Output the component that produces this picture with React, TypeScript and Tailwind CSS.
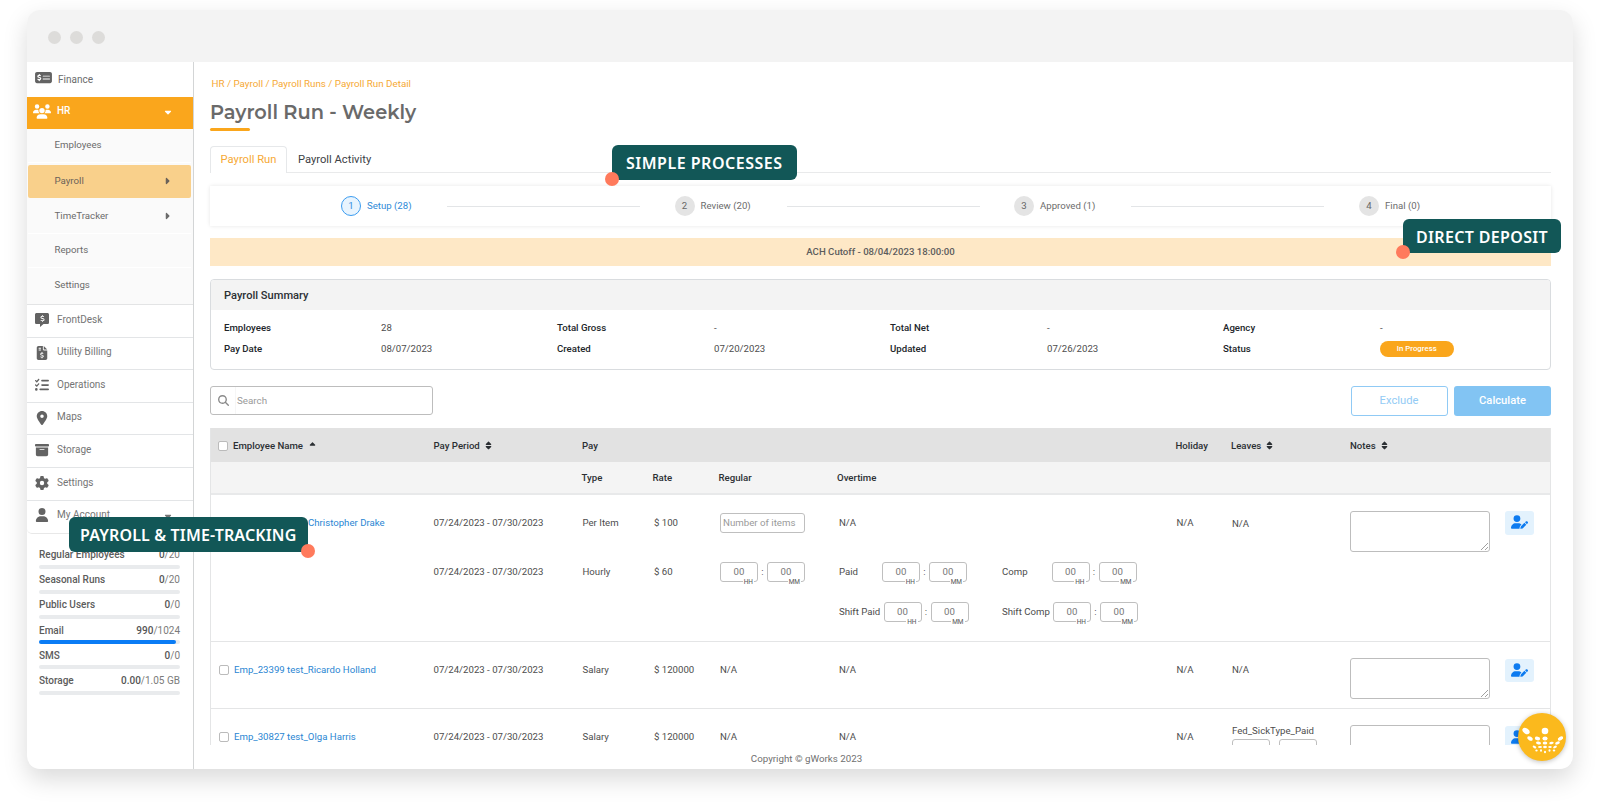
import React from "react";
import {
  FaMoneyCheckDollar, FaUsers, FaFileInvoiceDollar, FaListCheck, FaLocationDot, FaBoxArchive, FaGear,
  FaUser, FaUserPen, FaMagnifyingGlass, FaSort, FaCaretDown, FaCaretRight, FaCaretUp, FaDollarSign,
} from "react-icons/fa6";

type Kids = { children?: React.ReactNode; className?: string };

function MessageDollar() {
  return (
    <span className="grid">
      <svg viewBox="0 0 14 14" className="col-start-1 row-start-1 size-[14px]" fill="currentColor">
        <path d="M1.6 0h10.8C13.300 0 14 .7 14 1.600v7.800c0 .9-.7 1.600-1.600 1.600H8.500L5 13.900V11H1.600C.7 11 0 10.300 0 9.400V1.600C0 .7.7 0 1.600 0z" />
      </svg>
      <FaDollarSign className="col-start-1 row-start-1 mt-[2px] size-[7px] justify-self-center text-white" />
    </span>
  );
}

const menu = [
  { label: "FrontDesk", icon: <MessageDollar /> },
  { label: "Utility Billing", icon: <FaFileInvoiceDollar className="size-[14px]" /> },
  { label: "Operations", icon: <FaListCheck className="size-[14px]" /> },
  { label: "Maps", icon: <FaLocationDot className="size-[14px]" /> },
  { label: "Storage", icon: <FaBoxArchive className="size-[14px]" /> },
  { label: "Settings", icon: <FaGear className="size-[14px]" /> },
];

const usage = [
  { label: "Regular Employees", used: "0", total: "20", pct: 0 },
  { label: "Seasonal Runs", used: "0", total: "20", pct: 0 },
  { label: "Public Users", used: "0", total: "0", pct: 0 },
  { label: "Email", used: "990", total: "1024", pct: 97 },
  { label: "SMS", used: "0", total: "0", pct: 0 },
  { label: "Storage", used: "0.00", total: "1.05 GB", pct: 0 },
];

function SubItem({ label, active, arrow }: { label: string; active?: boolean; arrow?: boolean }) {
  return (
    <div className={active
      ? "ml-px mr-[2px] mt-[2px] mb-px flex h-[33px] shrink-0 items-center justify-between rounded-[2px] bg-[#f9d08b] pb-px pl-[26.500px] pr-[19px] text-[#6b6259]"
      : "ml-px mr-[2px] flex h-[34.500px] shrink-0 items-center justify-between border-b border-white pl-[26.500px] pr-[19px] last:border-0"}>
      <span>{label}</span>
      {arrow && <FaCaretRight className="size-[10px]" />}
    </div>
  );
}

function Sidebar() {
  return (
    <aside className="flex w-[167px] shrink-0 flex-col border-r border-[#d3d5d6] text-[10px] leading-none text-[#6b6b6b]">
      <div className="flex h-[35px] items-center pl-2">
        <FaMoneyCheckDollar className="mb-1 h-[15px] w-[17px] text-[#636363]" />
        <span className="ml-[6px]">Finance</span>
      </div>
      <div className="flex h-[31.500px] items-center bg-[#faa61c] pb-[2px] pl-[6px] pr-5 text-white">
        <FaUsers className="h-[17px] w-[18px]" />
        <span className="mb-px ml-[6px] grow font-medium">HR</span>
        <FaCaretDown className="mt-px size-[10px]" />
      </div>
      <div className="flex h-[176.500px] flex-col border-b border-[#e3e4e5] bg-[#fafafa] text-[9.700px]">
        <SubItem label="Employees" />
        <SubItem label="Payroll" active arrow />
        <SubItem label="TimeTracker" arrow />
        <SubItem label="Reports" />
        <SubItem label="Settings" />
      </div>
      {menu.map((m) => (
        <div key={m.label} className="flex h-[32.600px] items-center border-b border-[#e3e5e7] pb-[2.500px] pl-2 text-[#757575]">
          <span className="mt-px text-[#636363]">{m.icon}</span>
          <span className="ml-2">{m.label}</span>
        </div>
      ))}
      <div className="flex h-[33px] items-center rounded-bl-[5px] border-b border-[#e8e8e8] pb-[3px] pl-2 pr-5 text-[#757575]">
        <FaUser className="size-[14px] text-[#636363]" />
        <span className="ml-2 grow">My Account</span>
        <FaCaretDown className="mt-[2px] size-[10px]" />
      </div>
      <div className="flex flex-col pl-[12px] pr-[13px] pt-[12px]">
        {usage.map((u) => (
          <div key={u.label} className="h-[25.200px]">
            <div className="flex h-[18px] items-center justify-between pt-px">
              <span className="font-medium text-[#5c5c5c]">{u.label}</span>
              <span className="text-[#7b7b7b]"><b className="font-medium text-[#555]">{u.used}</b>/{u.total}</span>
            </div>
            <div className="mt-px h-1 rounded-full bg-[#e9ebed]">
              <div className="h-1 rounded-full bg-[#0a7cf5]" style={{ width: `${u.pct}%` }} />
            </div>
          </div>
        ))}
      </div>
    </aside>
  );
}

function Step({ n, label, active, className }: { n: number; label: string; active?: boolean; className: string }) {
  return (
    <div className={`flex shrink-0 items-center gap-[6px] ${className}`}>
      <span className={active
        ? "flex size-5 items-center justify-center rounded-full border border-[#3b9cf0] bg-[#e8f4fe] text-[#2f8fe0]"
        : "flex size-5 items-center justify-center rounded-full bg-[#e4e4e4] text-[#666]"}>{n}</span>
      <span className={active ? "text-[#2f8ad8]" : "text-[#6c6c6c]"}>{label}</span>
    </div>
  );
}

function StepLine({ className }: Kids) {
  return <div className={`h-px shrink-0 bg-[#e3e5e7] ${className}`} />;
}

function Pair({ a, b }: { a: string; b: React.ReactNode }) {
  return (
    <div className="flex h-[21px] items-center">
      <span className="w-[157px] font-medium text-[#212529]">{a}</span>
      <span>{b}</span>
    </div>
  );
}

function Unit({ unit }: { unit: string }) {
  return (
    <div className="relative flex h-5 w-[38px] items-center justify-center rounded-[3px] border border-[#bfbfbf] text-[#777]">
      00
      <span className="absolute -bottom-[4px] right-[3px] bg-white px-px text-[6.500px] leading-[6px] text-[#555]">{unit}</span>
    </div>
  );
}

function TimeInput() {
  return (
    <div className="flex items-center">
      <Unit unit="HH" />
      <span className="w-[9px] text-center">:</span>
      <Unit unit="MM" />
    </div>
  );
}

function Notes() {
  return (
    <div className="flex h-[41px] w-[140px] items-end justify-end rounded-[3px] border border-[#bdbdbd] p-px">
      <svg viewBox="0 0 7 7" className="size-[7px]" stroke="#888" strokeWidth=".8"><path d="M0 7 7 0M4 7 7 4" /></svg>
    </div>
  );
}

function EditButton() {
  return (
    <div className="flex h-[23.500px] w-[29px] items-center justify-center rounded-[3px] bg-[#e3f2fd] pb-px">
      <FaUserPen className="h-[14px] w-[17px] text-[#0d7bf0]" />
    </div>
  );
}

function Check() {
  return <span className="size-[10px] rounded-[2px] border border-[#bbb] bg-white" />;
}

const PERIOD = "07/24/2023 - 07/30/2023";

function SalaryRow({ name, leaves, className }: { name: string; leaves: React.ReactNode; className: string }) {
  return (
    <div className={`flex shrink-0 border-[#e4e5e6] ${className}`}>
      <div className="flex h-[55px] w-[222.500px] items-center gap-[5px] pl-2"><Check /><span className="text-[#2a86d3]">{name}</span></div>
      <div className="flex h-[55px] w-[149px] items-center">{PERIOD}</div>
      <div className="flex h-[55px] w-[71.500px] items-center">Salary</div>
      <div className="flex h-[55px] w-[66px] items-center">$ 120000</div>
      <div className="flex h-[55px] w-[119px] items-center">N/A</div>
      <div className="flex h-[55px] w-[337.500px] items-center">N/A</div>
      <div className="flex h-[55px] w-[55.500px] items-center">N/A</div>
      <div className="w-[118px]">{leaves}</div>
      <div className="w-[155px] pt-4"><Notes /></div>
      <div className="pt-[16.500px]"><EditButton /></div>
    </div>
  );
}

function Table() {
  return (
    <div className="mt-[12.500px] flex h-[316.500px] flex-col overflow-hidden border-x border-[#e4e5e6] text-[9.650px] text-[#4d4d4d]">
      <div className="-mx-px flex h-[33.500px] shrink-0 items-center bg-[#e2e2e2] pl-px pt-[2px] font-medium text-[#2b2f33]">
        <div className="flex w-[222.500px] items-center pl-[7px]"><Check /><span className="ml-[5px]">Employee Name</span><FaCaretUp className="mb-[3px] ml-[5px] size-[9px]" /></div>
        <div className="flex w-[148.500px] items-center gap-1">Pay Period <FaSort className="size-[9px]" /></div>
        <div className="w-[593.500px]">Pay</div>
        <div className="w-[55.500px]">Holiday</div>
        <div className="flex w-[119px] items-center gap-1">Leaves <FaSort className="size-[9px]" /></div>
        <div className="flex items-center gap-1">Notes <FaSort className="size-[9px]" /></div>
      </div>
      <div className="flex h-[33.500px] shrink-0 items-center border-b-2 border-[#e8e9ea] bg-[#f4f4f4] pl-[370.500px] pt-[2px] font-medium text-[#2b2f33]">
        <div className="w-[71px]">Type</div>
        <div className="w-[66px]">Rate</div>
        <div className="w-[118.500px]">Regular</div>
        <div>Overtime</div>
      </div>

      <div className="flex h-[147px] shrink-0 border-b border-[#e4e5e6]">
        <div className="flex h-[55px] w-[222.500px] items-center pl-[97px]"><span className="text-[#2a86d3]">Christopher Drake</span></div>
        <div className="flex w-[743px] flex-col">
          <div className="flex h-[55px] items-center">
            <div className="w-[149px]">{PERIOD}</div>
            <div className="w-[71.500px]">Per Item</div>
            <div className="w-[66px]">$ 100</div>
            <div className="w-[119px]">
              <div className="flex h-5 w-[85px] items-center rounded-[3px] border border-[#bfbfbf] pl-[2px] text-[9.700px] text-[#9a9a9a]">Number of items</div>
            </div>
            <div>N/A</div>
          </div>
          <div className="flex h-[43px] items-center">
            <div className="w-[149px]">{PERIOD}</div>
            <div className="w-[71.500px]">Hourly</div>
            <div className="w-[66px]">$ 60</div>
            <div className="w-[119px]"><TimeInput /></div>
            <div className="w-[43px]">Paid</div>
            <TimeInput />
            <div className="ml-[35px] w-[49.500px]">Comp</div>
            <TimeInput />
          </div>
          <div className="flex h-[38.500px] items-center pl-[405.500px]">
            <div className="w-[44.500px]">Shift Paid</div>
            <TimeInput />
            <div className="ml-[33.500px] w-[51px]">Shift Comp</div>
            <TimeInput />
          </div>
        </div>
        <div className="flex h-[55px] w-[55.500px] items-center">N/A</div>
        <div className="flex h-[57px] w-[118px] items-center">N/A</div>
        <div className="w-[155px] pt-[15.500px]"><Notes /></div>
        <div className="pt-4"><EditButton /></div>
      </div>

      <SalaryRow className="h-[67px] border-b" name="Emp_23399 test_Ricardo Holland" leaves={<div className="flex h-[56px] items-center">N/A</div>} />
      <SalaryRow
        className="h-[80px]"
        name="Emp_30827 test_Olga Harris"
        leaves={
          <div className="pt-[17px]">
            <div className="pb-[3px]">Fed_SickType_Paid</div>
            <div className="flex gap-[9px]">
              <div className="h-5 w-[38px] rounded-[3px] border border-[#bfbfbf]" />
              <div className="h-5 w-[38px] rounded-[3px] border border-[#bfbfbf]" />
            </div>
          </div>
        }
      />
    </div>
  );
}

function Callout({ children, className, dot }: Kids & { dot: string }) {
  return (
    <div className={`absolute flex h-[34.500px] items-center justify-center rounded-[6px] bg-[#125757] pt-[2px] font-['Noto_Sans','Open_Sans',sans-serif] text-[16px] font-semibold leading-none text-white ${className}`}>
      {children}
      <span className={`absolute -bottom-[6px] size-[14px] rounded-full bg-[#ff7a5c] ${dot}`} />
    </div>
  );
}

function ChatLogo() {
  return (
    <div className="absolute left-[1517.500px] top-[713px] size-[48px] rounded-full bg-[#fbb91d] shadow-[0_1px_5px_rgba(0,0,0,0.25)]">
      <svg viewBox="0 0 48 48" className="size-12" fill="#fff">
        <circle cx="27" cy="18" r="3.300" />
        <ellipse cx="8" cy="18" rx="4" ry="2.600" transform="rotate(35 8 18)" />
        <ellipse cx="12" cy="25.500" rx="3" ry="1.900" transform="rotate(30 12 25.500)" />
        <ellipse cx="19.500" cy="25.500" rx="2.700" ry="1.900" transform="rotate(10 19.500 25.500)" />
        <ellipse cx="27" cy="25.500" rx="2.600" ry="1.900" />
        <ellipse cx="42.500" cy="25.500" rx="2.900" ry="1.800" transform="rotate(-30 42.500 25.500)" />
        <ellipse cx="20.500" cy="30" rx="2.500" ry="1.400" transform="rotate(10 20.500 30)" />
        <ellipse cx="27" cy="30" rx="2.300" ry="1.500" />
        <ellipse cx="33.500" cy="30" rx="2.200" ry="1.300" transform="rotate(-10 33.500 30)" />
        <ellipse cx="39.500" cy="30" rx="2.500" ry="1.400" transform="rotate(-25 39.500 30)" />
        <ellipse cx="16.500" cy="34" rx="2" ry="1.100" transform="rotate(30 16.500 34)" />
        <ellipse cx="22" cy="34" rx="2" ry="1.100" />
        <ellipse cx="27" cy="34" rx="1.900" ry="1.200" />
        <ellipse cx="32" cy="34" rx="1.800" ry="1.100" />
        <ellipse cx="37" cy="34" rx="2" ry="1.100" transform="rotate(-25 37 34)" />
        <ellipse cx="18.500" cy="37.500" rx="1.200" ry="1" />
        <ellipse cx="23" cy="37.500" rx="1" ry="1.300" />
        <ellipse cx="27" cy="39" rx="1" ry="1.300" />
        <ellipse cx="31.500" cy="37.500" rx="1" ry="1.300" />
        <ellipse cx="36" cy="37.500" rx="1.300" ry="1" />
      </svg>
    </div>
  );
}

export default function App() {
  return (
    <div className="relative h-[808px] w-[1600px] overflow-hidden bg-white pl-[27px] pt-[10px] font-[Roboto,'Liberation_Sans',sans-serif] leading-none">
      <div className="flex h-[758.500px] w-[1546px] flex-col overflow-hidden rounded-[13px] bg-white shadow-[0_10px_24px_rgba(0,0,0,0.15)]">
        <div className="flex h-[52px] shrink-0 items-center gap-[9px] bg-[#f3f3f3] pl-[20.500px] pt-[2px]">
          <span className="size-[13px] rounded-full bg-[#dddcda]" />
          <span className="size-[13px] rounded-full bg-[#dddcda]" />
          <span className="size-[13px] rounded-full bg-[#dddcda]" />
        </div>
        <div className="flex min-h-0 grow">
          <Sidebar />
          <main className="flex grow flex-col pl-4 pr-[22px]">
            <nav className="mt-4 flex h-[11px] items-center pl-[1.500px] text-[9.800px] text-[#f6a935]">HR / Payroll / Payroll Runs / Payroll Run Detail</nav>
            <h1 className="mt-[12px] font-[Montserrat,Inter,sans-serif] text-[19.350px] font-semibold leading-[22px] text-[#6a6a6a]">Payroll Run - Weekly</h1>
            <div className="mt-[4.500px] h-[3px] w-10 shrink-0 rounded-full bg-[#faa61c]" />
            <div className="mt-[15.500px] flex h-[27px] text-[11.200px]">
              <div className="flex w-[77px] items-center justify-center rounded-t-[4px] border border-b-0 border-[#e6e8ea] text-[#f6a935]">Payroll Run</div>
              <div className="flex grow items-center border-b-[1.500px] border-[#e9eaeb] pl-[11px] pt-px text-[#3d4145]">Payroll Activity</div>
            </div>
            <div className="mt-[13px] flex h-10 items-center pl-[131px] text-[9.650px] shadow-[0_0_4px_rgba(0,0,0,0.10)]">
              <Step className="w-[106px]" n={1} label="Setup (28)" active />
              <StepLine className="w-[193px]" />
              <Step className="ml-[34.500px] w-[112px]" n={2} label="Review (20)" />
              <StepLine className="w-[193px]" />
              <Step className="ml-[34.500px] w-[117px]" n={3} label="Approved (1)" />
              <StepLine className="w-[193px]" />
              <Step className="ml-[35px]" n={4} label="Final (0)" />
            </div>
            <div className="mt-[12px] flex h-[28px] items-center justify-center bg-[#fee8c6] text-[9.650px] font-medium text-[#5c5c5c]">ACH Cutoff - 08/04/2023 18:00:00</div>
            <section className="mt-[13px] flex h-[90.500px] flex-col overflow-hidden rounded-[4px] border border-[#d9dcdf] text-[9.650px] text-[#4d4d4d]">
              <h2 className="flex h-[30px] items-center bg-[#f3f3f3] pl-[13px] pt-px text-[11.100px] font-medium text-[#2b2f33]">Payroll Summary</h2>
              <div className="grid grid-cols-[333px_333px_333px_1fr] pl-[13px] pt-[7px]">
                <Pair a="Employees" b="28" />
                <Pair a="Total Gross" b="-" />
                <Pair a="Total Net" b="-" />
                <Pair a="Agency" b="-" />
                <Pair a="Pay Date" b="08/07/2023" />
                <Pair a="Created" b="07/20/2023" />
                <Pair a="Updated" b="07/26/2023" />
                <Pair a="Status" b={<span className="mt-px flex h-[16.500px] w-[73.500px] items-center justify-center rounded-full bg-[#faa61c] text-[7.800px] font-medium text-white">In Progress</span>} />
              </div>
            </section>
            <div className="mt-[16.500px] flex h-[29.500px] items-start">
              <div className="flex h-[29px] w-[223px] items-center rounded-[3px] border border-[#bdbdbd] text-[#9a9a9a]">
                <span className="flex h-full w-[25px] items-center border-r border-[#f6f6f6] pl-[7px]"><FaMagnifyingGlass className="size-[11px] text-[#8a8a8a]" /></span>
                <span className="pl-px text-[9.800px]">Search</span>
              </div>
              <div className="ml-auto flex h-[29.500px] w-[97px] items-center justify-center rounded-[3px] border border-[#90caf5] text-[11.200px] text-[#93cbf5]">Exclude</div>
              <div className="ml-[6.500px] flex h-[29.500px] w-[97px] items-center justify-center rounded-[3px] bg-[#82c4f3] text-[11.200px] font-medium text-white">Calculate</div>
            </div>
            <Table />
            <footer className="mt-[8.500px] flex h-[11px] items-center justify-center pr-[148px] text-[9.750px] text-[#6f6f6f]">Copyright © gWorks 2023</footer>
          </main>
        </div>
      </div>
      <Callout className="left-[612px] top-[145px] w-[184.500px] tracking-[0.5px]" dot="-left-[7px]">SIMPLE PROCESSES</Callout>
      <Callout className="left-[1403px] top-[218.500px] w-[158px] tracking-[0.35px]" dot="-left-[7px]">DIRECT DEPOSIT</Callout>
      <Callout className="left-[68.500px] top-[517px] w-[239.500px] tracking-[0.15px]" dot="-right-[7px]">PAYROLL &amp; TIME-TRACKING</Callout>
      <ChatLogo />
    </div>
  );
}
